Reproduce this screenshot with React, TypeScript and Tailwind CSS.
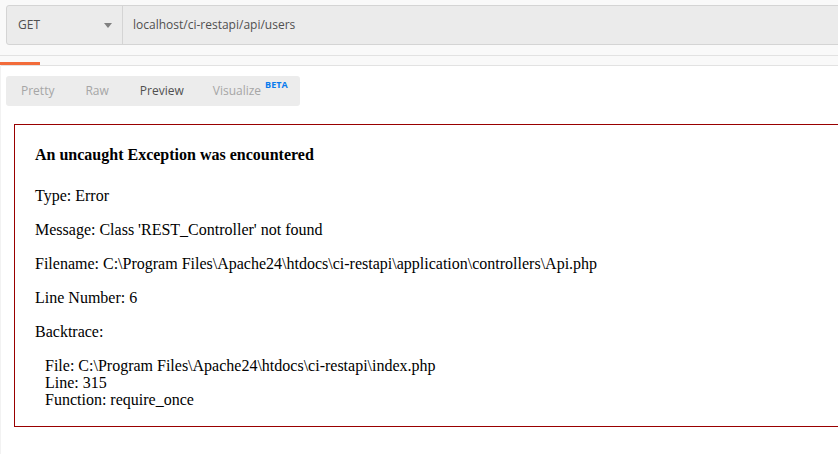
import React from "react";

export default function App() {
  return (
    <div className="w-[838px] h-[454px] overflow-hidden bg-white relative">
      {/* top request bar */}
      <div className="bg-[#f9f9f9] h-[55px] pt-[5px] pl-[6px]">
        <div className="flex h-[40px] w-[900px] bg-[#ebebeb] border border-[#d4d4d4] rounded-[3px] font-['Open_Sans',sans-serif] text-[12px]">
          <div className="w-[116px] flex items-center justify-between pl-[11px] pr-[10px] border-r border-[#d4d4d4] text-[#505050]">
            <span>GET</span>
            <svg width="8" height="5" viewBox="0 0 8 5"><path d="M0 0h8L4 5z" fill="#808080" /></svg>
          </div>
          <div className="flex items-center pl-[10px] text-[#505050]">localhost/ci-restapi/api/users</div>
        </div>
      </div>
      <div className="h-[10px] bg-[#f9f9f9] border-t border-[#e2e2e2] relative">
        <div className="absolute left-0 bottom-0 w-[40px] h-[3px] bg-[#f26b3a]" />
      </div>
      <div className="border-l border-[#f2f2f2] h-[400px]">
        <div className="border-t border-[#e2e2e2]" />
        <div className="pt-[10px] pl-[5px]">
          <div className="flex items-center w-[294px] h-[30px] bg-[#ececec] rounded-[3px] font-['Open_Sans',sans-serif] text-[12px]">
            <span className="ml-[15px] text-[#a6a6a6]">Pretty</span>
            <span className="ml-[31px] text-[#a6a6a6]">Raw</span>
            <span className="ml-[31px] text-[#505050]">Preview</span>
            <span className="ml-[29px] text-[#a6a6a6]">Visualize</span>
            <sup className="ml-[4px] -mt-[4px] text-[9px] font-bold text-[#097bed]">BETA</sup>
          </div>
        </div>
        {/* error box */}
        <div className="mt-[18px] ml-[13px] w-[900px] border border-[#990000] pl-[20px] font-['Liberation_Serif',serif] text-[16px] text-black">
          <h4 className="font-bold leading-[18px] mt-[21px] mb-[23px]">An uncaught Exception was encountered</h4>
          <p className="leading-[18px] my-[16px]">Type: Error</p>
          <p className="leading-[18px] my-[16px]">Message: Class 'REST_Controller' not found</p>
          <p className="leading-[18px] my-[16px]">Filename: C:\Program Files\Apache24\htdocs\ci-restapi\application\controllers\Api.php</p>
          <p className="leading-[18px] my-[16px]">Line Number: 6</p>
          <p className="leading-[18px] my-[16px]">Backtrace:</p>
          <p className="leading-[17px] mt-[16px] mb-[18px] ml-[10px]">
            File: C:\Program Files\Apache24\htdocs\ci-restapi\index.php<br />
            Line: 315<br />
            Function: require_once
          </p>
        </div>
      </div>
    </div>
  );
}
